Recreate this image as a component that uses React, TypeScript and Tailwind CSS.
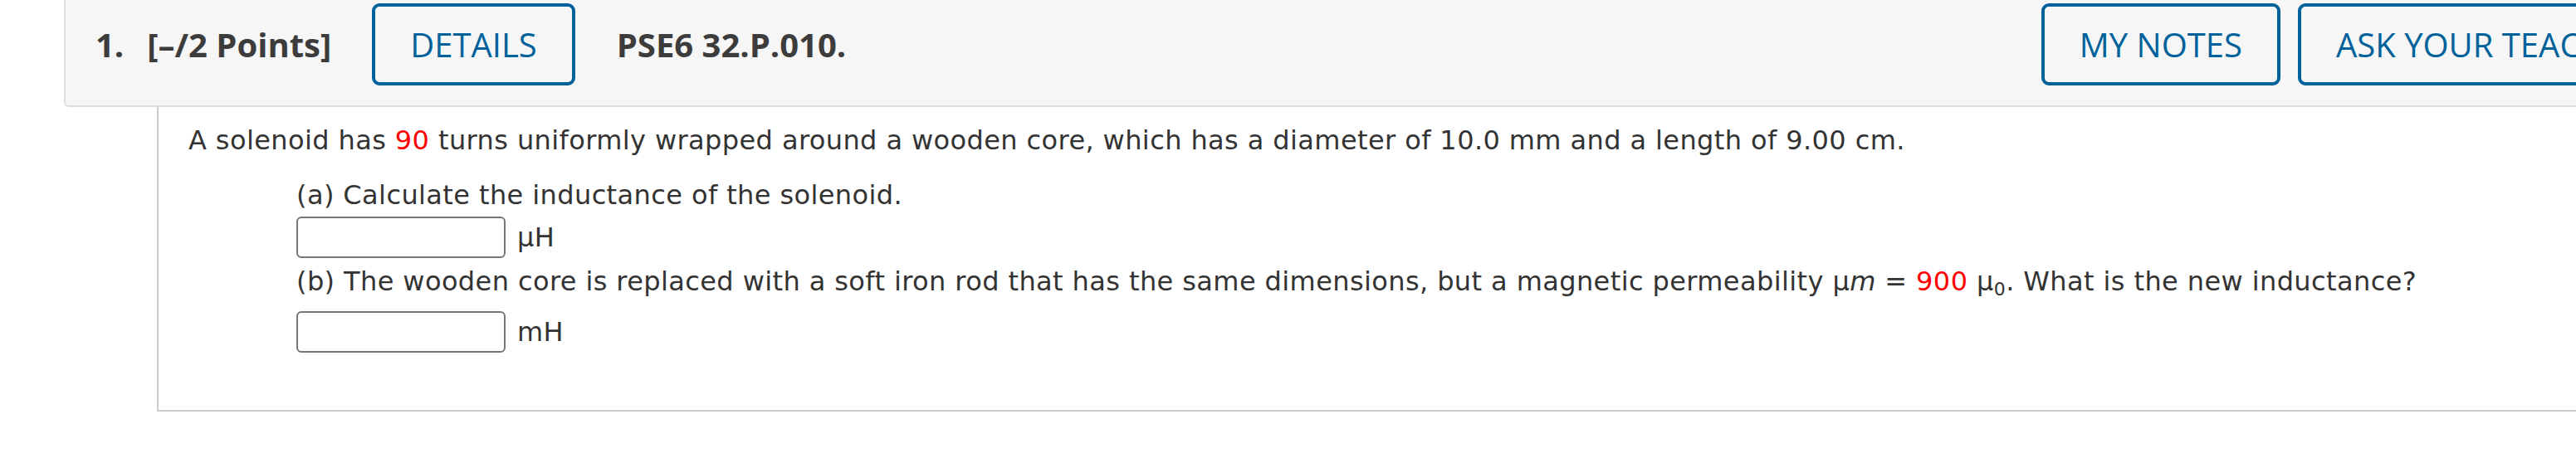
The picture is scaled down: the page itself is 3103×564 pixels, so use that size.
import React from 'react'

const OutlineButton = ({ label }: { label: string }) => (
  <button className="h-[99px] shrink-0 rounded-[9px] border-4 border-[#00629b] bg-[#f6f6f6] px-[42px] text-[40px] font-[500] leading-[54px] text-[#00629b]">
    {label}
  </button>
)

const AnswerBox = ({ unit }: { unit: string }) => (
  <div className="flex h-[50px] items-center">
    <input
      type="text"
      className="h-[50px] w-[252px] rounded-[6px] border-2 border-[#767676] bg-white"
    />
    <span className="ml-[14px] leading-[40px]">{unit}</span>
  </div>
)

export default function App() {
  return (
    <div className="h-[564px] w-[3103px] overflow-hidden bg-white">
      <div className="w-[3271px] pl-[77px]">
        {/* question header */}
        <div className="flex h-[129px] items-start rounded-bl-[6px] border-b-2 border-l-2 border-[#dddddd] bg-[#f6f6f6] pl-[36px] pr-[40px] pt-[4px] font-['Open_Sans',sans-serif] text-[40px] text-[#3c3c3c]">
          <span className="flex h-[99px] items-center font-bold leading-[54px]">1.</span>
          <span className="ml-[28px] flex h-[99px] items-center font-bold leading-[54px]">[–/2 Points]</span>
          <div className="ml-[49px]">
            <OutlineButton label="DETAILS" />
          </div>
          <span className="ml-[50px] flex h-[99px] items-center font-bold leading-[54px]">PSE6 32.P.010.</span>
          <div className="ml-auto flex gap-[21px]">
            <OutlineButton label="MY NOTES" />
            <OutlineButton label="ASK YOUR TEACHER" />
          </div>
        </div>

        {/* question body */}
        <div className="ml-[112px] border-b-2 border-l-2 border-[#cccccc] pb-[69px] pl-[36px] pt-[20px] font-['DejaVu_Sans',sans-serif] text-[32px] leading-[40px] tracking-[0.4px] text-[#333333]">
          <p>
            A solenoid has <span className="text-[#ff0000]">90</span> turns uniformly wrapped around a wooden core, which has a diameter of 10.0 mm and a length of 9.00 cm.
          </p>
          <div className="ml-[130px] mt-[26px]">
            <p>(a) Calculate the inductance of the solenoid.</p>
            <div className="mt-[6px]">
              <AnswerBox unit="µH" />
            </div>
            <p className="mt-[8px]">
              (b) The wooden core is replaced with a soft iron rod that has the same dimensions, but a magnetic permeability µ<i>m</i> = <span className="text-[#ff0000]">900</span> µ<sub className="text-[22px]">0</sub>. What is the new inductance?
            </p>
            <div className="mt-[16px]">
              <AnswerBox unit="mH" />
            </div>
          </div>
        </div>
      </div>
    </div>
  )
}
